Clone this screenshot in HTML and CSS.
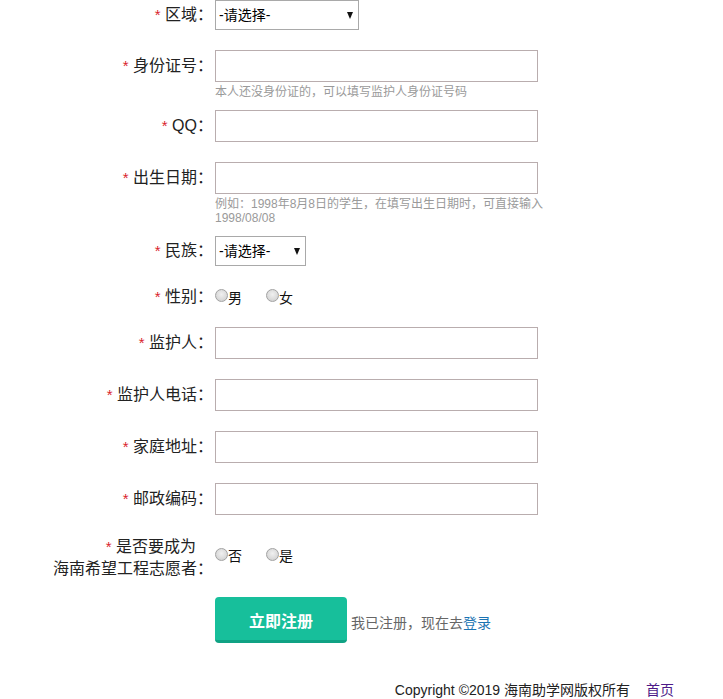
FILE: index.html
```html
<!DOCTYPE html>
<html lang="zh-CN">
<head>
<meta charset="utf-8">
<title>注册</title>
<link rel="stylesheet" href="styles.css">
</head>
<body>
<form class="reg">
  <div class="row row-sel">
    <label class="lbl"><i class="req">*</i> 区域：</label>
    <div class="field"><div class="sel sel-wide"><select><option>-请选择-</option></select></div></div>
  </div>
  <div class="row">
    <label class="lbl"><i class="req">*</i> 身份证号：</label>
    <div class="field">
      <input class="txt" type="text">
      <p class="hint">本人还没身份证的，可以填写监护人身份证号码</p>
    </div>
  </div>
  <div class="row">
    <label class="lbl"><i class="req">*</i> QQ：</label>
    <div class="field"><input class="txt" type="text"></div>
  </div>
  <div class="row">
    <label class="lbl"><i class="req">*</i> 出生日期：</label>
    <div class="field">
      <input class="txt" type="text">
      <p class="hint">例如：1998年8月8日的学生，在填写出生日期时，可直接输入1998/08/08</p>
    </div>
  </div>
  <div class="row row-sel">
    <label class="lbl"><i class="req">*</i> 民族：</label>
    <div class="field"><div class="sel sel-narrow"><select><option>-请选择-</option></select></div></div>
  </div>
  <div class="row row-radio">
    <label class="lbl"><i class="req">*</i> 性别：</label>
    <div class="field radios">
      <label class="opt"><input type="radio" name="sex">男</label>
      <label class="opt"><input type="radio" name="sex">女</label>
    </div>
  </div>
  <div class="row">
    <label class="lbl"><i class="req">*</i> 监护人：</label>
    <div class="field"><input class="txt" type="text"></div>
  </div>
  <div class="row">
    <label class="lbl"><i class="req">*</i> 监护人电话：</label>
    <div class="field"><input class="txt" type="text"></div>
  </div>
  <div class="row">
    <label class="lbl"><i class="req">*</i> 家庭地址：</label>
    <div class="field"><input class="txt" type="text"></div>
  </div>
  <div class="row">
    <label class="lbl"><i class="req">*</i> 邮政编码：</label>
    <div class="field"><input class="txt" type="text"></div>
  </div>
  <div class="row row-vol">
    <label class="lbl lbl-two"><span class="l1"><i class="req">*</i> 是否要成为</span><span class="l2">海南希望工程志愿者：</span></label>
    <div class="field radios">
      <label class="opt"><input type="radio" name="vol">否</label>
      <label class="opt"><input type="radio" name="vol">是</label>
    </div>
  </div>
  <div class="row row-btn">
    <span></span>
    <div class="field actions">
      <button type="button" class="btn">立即注册</button>
      <span class="login-tip">我已注册，现在去<a href="#" class="login">登录</a></span>
    </div>
  </div>
</form>
<footer class="foot">
  <span class="copy">Copyright ©2019 海南助学网版权所有</span>
  <a href="#" class="home">首页</a>
</footer>
</body>
</html>
```
FILE: styles.css
```css
* { box-sizing: border-box; }
html, body { margin: 0; padding: 0; background: #fff; }
body {
  font-family: "Liberation Sans", "Noto Sans CJK SC", sans-serif;
  color: #222;
  width: 723px;
  height: 699px;
  overflow: hidden;
}
.reg { margin: 0; padding: 0; }
.row {
  display: grid;
  grid-template-columns: 213px 330px;
  column-gap: 2px;
  margin-bottom: 20px;
  align-items: start;
}
.lbl {
  text-align: right;
  font-size: 16px;
  line-height: 32px;
  height: 32px;
  white-space: nowrap;
  color: #222;
}
.req {
  font-style: normal;
  color: #d9232d;
  font-size: 15px;
}
.row-sel .lbl { line-height: 30px; height: 30px; }
.field { display: block; }
.txt {
  display: block;
  width: 323px;
  height: 32px;
  margin: 0;
  border: 1px solid #b9adae;
  background: #fff;
  padding: 0 5px;
  font-size: 14px;
  outline: none;
}
.hint {
  margin: 3px 0 -9px;
  font-size: 12px;
  line-height: 14px;
  color: #9a9a9a;
  width: 330px;
}
.sel { position: relative; height: 30px; }
.sel select {
  -webkit-appearance: none;
  appearance: none;
  display: block;
  width: 100%;
  height: 30px;
  margin: 0;
  border: 1px solid #a9a9a9;
  border-radius: 0;
  background: #fff;
  padding: 0 0 0 3px;
  font-family: "Liberation Sans", "Noto Sans CJK SC", sans-serif;
  font-size: 14px;
  color: #000;
  outline: none;
}
.sel::after {
  content: "";
  position: absolute;
  right: 6px;
  top: 12px;
  border-left: 3.5px solid transparent;
  border-right: 3.5px solid transparent;
  border-top: 7px solid #111;
  pointer-events: none;
}
.sel-wide { width: 144px; }
.sel-narrow { width: 91px; }
.row-radio .lbl { height: 21px; line-height: 21px; }
.radios {
  display: flex;
  align-items: center;
  height: 21px;
  font-size: 14px;
  color: #111;
}
.opt {
  display: flex;
  align-items: center;
  margin-right: 24px;
  font-family: "Noto Sans CJK SC", sans-serif;
  line-height: 20px;
}
.opt input {
  -webkit-appearance: none;
  appearance: none;
  width: 13px;
  height: 13px;
  margin: 0 0 2px 0;
  border: 1px solid #a2a2a2;
  border-radius: 50%;
  background: radial-gradient(circle at 50% 40%, #f0f0f0 0, #dcdcdc 55%, #c8c8c8 100%);
}
.row-vol { margin-bottom: 17px; align-items: center; }
.lbl-two {
  height: auto;
  line-height: 22px;
  display: flex;
  flex-direction: column;
  align-items: flex-end;
  padding-top: 1px;
}
.lbl-two .l1 { padding-right: 17px; }
.row-vol .radios { margin-top: -5px; }
.actions {
  display: flex;
  align-items: center;
  gap: 4px;
}
.btn {
  width: 132px;
  height: 46px;
  border: 0;
  border-bottom: 3px solid #10a284;
  border-radius: 4px;
  background: #17bf9b;
  color: #fff;
  font-family: "Noto Sans CJK SC", sans-serif;
  font-weight: bold;
  font-size: 16px;
  padding: 2px 0 0;
  cursor: pointer;
}
.login-tip {
  font-size: 14px;
  color: #666;
  margin-top: 4px;
}
.login { color: #1b74b3; text-decoration: none; }
.foot {
  display: flex;
  justify-content: flex-end;
  gap: 16px;
  padding-right: 49px;
  margin-top: 37px;
  font-size: 14px;
  line-height: 20px;
}
.copy { color: #222; }
.home { color: #4e1a88; text-decoration: none; }
```
